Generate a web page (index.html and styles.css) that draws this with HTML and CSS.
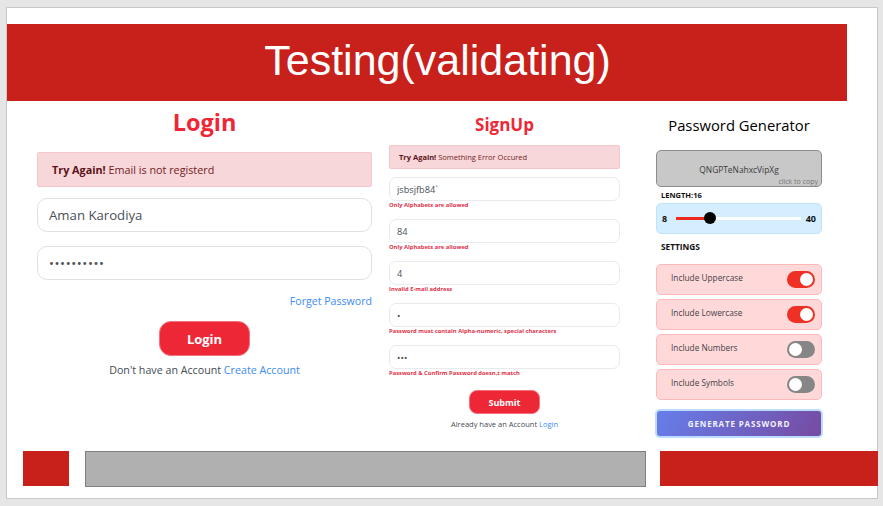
FILE: index.html
```html
<!DOCTYPE html>
<html lang="en">
<head>
<meta charset="utf-8">
<title>Testing(validating)</title>
<link rel="stylesheet" href="styles.css">
</head>
<body>
<div class="slide">
  <header class="banner"><h1>Testing(validating)</h1></header>
  <main class="columns">
    <section class="login">
      <h2 class="login-title">Login</h2>
      <div class="alert login-alert"><b>Try Again!</b> Email is not registerd</div>
      <input class="field login-field" type="text" value="Aman Karodiya">
      <input class="field login-field" type="password" value="aaaaaaaaaa">
      <a class="forget">Forget Password</a>
      <button class="btn login-btn">Login</button>
      <p class="note login-note">Don't have an Account <a>Create Account</a></p>
    </section>
    <section class="signup">
      <h2 class="signup-title">SignUp</h2>
      <div class="alert signup-alert"><b>Try Again!</b> Something Error Occured</div>
      <input class="field signup-field" type="text" value="jsbsjfb84`">
      <p class="err">Only Alphabets are allowed</p>
      <input class="field signup-field" type="text" value="84">
      <p class="err">Only Alphabets are allowed</p>
      <input class="field signup-field" type="text" value="4">
      <p class="err">Invalid E-mail address</p>
      <input class="field signup-field" type="password" value="a">
      <p class="err">Password must contain Alpha-numeric, special characters</p>
      <input class="field signup-field" type="password" value="aaa">
      <p class="err">Password &amp; Confirm Password doesn,t match</p>
      <button class="btn signup-btn">Submit</button>
      <p class="note signup-note">Already have an Account <a>Login</a></p>
    </section>
    <section class="gen">
      <h2 class="gen-title">Password Generator</h2>
      <div class="output">QNGPTeNahxcVipXg<span class="copy">click to copy</span></div>
      <div class="label length-label">LENGTH:16</div>
      <div class="slider">
        <span>8</span>
        <div class="track"><div class="fill"></div><div class="thumb"></div></div>
        <span>40</span>
      </div>
      <div class="label settings-label">SETTINGS</div>
      <div class="opt">Include Uppercase<i class="toggle on"></i></div>
      <div class="opt">Include Lowercase<i class="toggle on"></i></div>
      <div class="opt">Include Numbers<i class="toggle"></i></div>
      <div class="opt">Include Symbols<i class="toggle"></i></div>
      <button class="generate">GENERATE PASSWORD</button>
    </section>
  </main>
  <footer class="foot">
    <div class="foot-red small"></div>
    <div class="foot-grey"></div>
    <div class="foot-red wide"></div>
  </footer>
</div>
</body>
</html>
```
FILE: styles.css
```css
* { box-sizing: border-box; }
html, body { margin: 0; height: 100%; }
body {
  background: #e6e6e6;
  padding: 7px 5px 7px 6px;
  height: 506px;
  overflow: hidden;
  font-family: "Open Sans", "Noto Sans", sans-serif;
}
h1, h2, p { margin: 0; }
a { color: #3a8bf5; }

.slide {
  height: 492px;
  background: #fff;
  border: 1px solid #c8c8c8;
  padding-top: 16px;
  display: flex;
  flex-direction: column;
}
.banner {
  width: 840px;
  height: 77px;
  background: #c8201b;
  display: flex;
  align-items: center;
  justify-content: center;
  padding: 0 0 4px 21px;
}
.banner h1 {
  font: 400 43px/1 "Liberation Sans", Arial, sans-serif;
  color: #fff;
}

.columns {
  height: 350px;
  display: flex;
  align-items: flex-start;
  padding-left: 30px;
}
.login { width: 335px; display: flex; flex-direction: column; }
.signup { width: 231px; margin-left: 17px; display: flex; flex-direction: column; }
.gen { width: 166px; margin-left: 36px; display: flex; flex-direction: column; }

.login-title {
  margin-top: 5px;
  height: 32px;
  font-size: 23.5px;
  line-height: 32px;
  font-weight: 700;
  color: #ee2737;
  text-align: center;
}
.alert {
  background: #f8d7da;
  border: 1px solid #f5c6cb;
  border-radius: 2px;
  color: #721c24;
  display: flex;
  align-items: center;
  white-space: pre;
}
.alert b { color: #5c1219; }
.login-alert { margin-top: 14px; height: 35px; padding-left: 14px; font-size: 10.8px; }
.field {
  display: block;
  width: 100%;
  background: #fff;
  border: 1px solid #dee2e6;
  color: #495057;
  font-family: inherit;
  outline: none;
}
.login-field { height: 34px; border-radius: 10px; padding: 0 11px; font-size: 13.2px; margin-top: 11px; }
.login-field + .login-field { margin-top: 14px; letter-spacing: 0.6px; }
.forget {
  align-self: flex-end;
  margin-top: 13px;
  height: 17px;
  font-size: 10.6px;
  line-height: 17px;
}
.btn {
  display: block;
  align-self: center;
  background: #ee2737;
  color: #fff;
  border: 1px solid #f4717d;
  font-family: inherit;
  font-weight: 700;
}
.login-btn { margin-top: 11px; width: 91px; height: 35px; border-radius: 12px; font-size: 13px; }
.note { color: #444c54; text-align: center; }
.login-note { margin-top: 6px; font-size: 10.7px; line-height: 16px; }

.signup-title {
  margin-top: 11px;
  height: 25px;
  font-size: 17px;
  line-height: 25px;
  font-weight: 700;
  color: #ee2737;
  text-align: center;
}
.signup-alert { margin-top: 8px; height: 24px; padding-left: 9px; font-size: 7.5px; }
.signup-field { height: 24px; border-radius: 7px; padding: 0 7px; font-size: 9.2px; border-color: #e8eaed; margin-top: 8px; }
.err {
  margin-bottom: 10px;
  height: 8px;
  font-size: 5.8px;
  line-height: 8px;
  font-weight: 700;
  color: #e0324a;
  white-space: nowrap;
}
.err + .field { margin-top: 0; }
.signup-btn { margin-top: 3px; width: 71px; height: 24px; border-radius: 8px; font-size: 9px; }
.signup-note { margin-top: 4px; font-size: 7.5px; line-height: 12px; }

.gen-title {
  margin-top: 14px;
  height: 21px;
  font-size: 14.8px;
  line-height: 21px;
  font-weight: 500;
  color: #000;
  text-align: center;
  white-space: nowrap;
}
.output {
  position: relative;
  margin-top: 14px;
  height: 37px;
  background: #c8c8c8;
  border: 1px solid #8c8c8c;
  border-radius: 5px;
  display: flex;
  align-items: center;
  justify-content: center;
  padding-top: 2px;
  font-size: 8.4px;
  color: #3c3c3c;
}
.copy {
  position: absolute;
  right: 3px;
  bottom: 0;
  font-size: 7px;
  color: #777;
}
.label { font-size: 7.5px; font-weight: 700; color: #111; padding-left: 5px; height: 11px; line-height: 11px; }
.length-label { margin-top: 3px; }
.slider {
  margin-top: 2px;
  height: 31px;
  background: #d4edff;
  border: 1px solid #bde3fd;
  border-radius: 5px;
  display: flex;
  align-items: center;
  padding: 0 5px;
  gap: 8px;
  font-size: 9px;
  font-weight: 700;
  color: #111;
}
.track { position: relative; flex: 1; height: 3px; background: #fff; margin-left: 1px; margin-right: -3px; }
.fill { height: 3px; width: 34px; background: #ee2a20; }
.thumb {
  position: absolute;
  left: 28px;
  top: -5px;
  width: 12px;
  height: 12px;
  border-radius: 50%;
  background: #000;
}
.settings-label { margin-top: 7px; font-size: 8.3px; }
.opt {
  margin-top: 4px;
  height: 31px;
  background: #ffd9d9;
  border: 1px solid #ffb8b8;
  border-radius: 5px;
  display: flex;
  align-items: center;
  justify-content: space-between;
  padding: 0 6px 5px 14px;
  font-size: 8.3px;
  color: #3f3f46;
}
.settings-label + .opt { margin-top: 12px; }
.toggle {
  position: relative;
  top: 2.5px;
  width: 28px;
  height: 17px;
  border-radius: 9px;
  background: #868686;
}
.toggle::after {
  content: "";
  position: absolute;
  left: 2px;
  top: 2px;
  width: 13px;
  height: 13px;
  border-radius: 50%;
  background: #fff;
}
.toggle.on { background: #ee3124; }
.toggle.on::after { left: 13px; }
.generate {
  margin-top: 9px;
  margin-left: -1px;
  width: 168px;
  height: 29px;
  border: 2px solid #bcdcff;
  border-radius: 5px;
  background: linear-gradient(120deg, #667eea, #764ba2);
  color: #f2f2ff;
  font-family: inherit;
  font-size: 8px;
  font-weight: 700;
  letter-spacing: 0.85px;
}

.foot { display: flex; padding-left: 16px; align-items: flex-start; margin-right: -1px; }
.foot-red { background: #c8201b; height: 35px; }
.small { width: 46px; }
.foot-grey {
  margin-left: 16px;
  width: 561px;
  height: 36px;
  background: #b0b0b0;
  border: 1px solid #808080;
}
.wide { margin-left: 14px; flex: 1; }
```
